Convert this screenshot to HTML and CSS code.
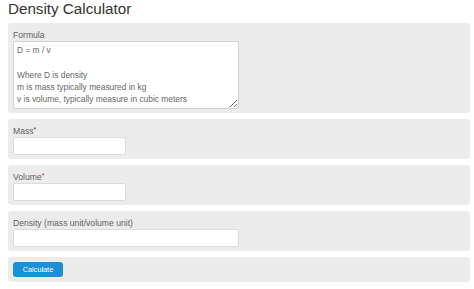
FILE: index.html
```html
<!DOCTYPE html>
<html>
<head>
<meta charset="utf-8">
<link rel="stylesheet" href="styles.css">
</head>
<body>
<h1 class="title">Density Calculator</h1>
<div class="panel">
  <label class="lbl">Formula</label>
  <textarea class="formula">D = m / v

Where D is density
m is mass typically measured in kg
v is volume, typically measure in cubic meters</textarea>
</div>
<div class="panel">
  <label class="lbl">Mass<span class="req">*</span></label>
  <input class="field short" type="text">
</div>
<div class="panel">
  <label class="lbl">Volume<span class="req">*</span></label>
  <input class="field short" type="text">
</div>
<div class="panel">
  <label class="lbl">Density (mass unit/volume unit)</label>
  <input class="field long" type="text">
</div>
<div class="panel btnpanel">
  <button class="calc" type="button">Calculate</button>
</div>
</body>
</html>
```
FILE: styles.css
```css
html, body {
  margin: 0;
  padding: 0;
  background: #ffffff;
}
body {
  padding: 0 4px 0 8px;
  font-family: "Liberation Sans", Arial, sans-serif;
}
.title {
  margin: 0 0 5px 0;
  font-size: 15.2px;
  line-height: 18px;
  font-weight: normal;
  color: #333333;
}
.panel {
  display: flex;
  flex-direction: column;
  align-items: flex-start;
  background: #ececec;
  border-radius: 3px;
  padding: 7px 5px 4px 5px;
  margin-bottom: 6px;
  width: 452px;
}
.lbl {
  display: block;
  font-size: 8.6px;
  line-height: 11px;
  height: 11px;
  color: #626262;
}
.req {
  color: #cc2222;
  font-size: 7px;
  line-height: 0;
  vertical-align: 2px;
}
.formula {
  box-sizing: border-box;
  display: block;
  width: 226px;
  height: 68px;
  margin: 0;
  padding: 2px 3px;
  border: 1px solid #d2d2d2;
  border-radius: 2px;
  background: #ffffff;
  font-family: "Liberation Sans", Arial, sans-serif;
  font-size: 8.4px;
  line-height: 12.3px;
  color: #666666;
  overflow: hidden;
}
.field {
  box-sizing: border-box;
  display: block;
  height: 18px;
  margin: 0;
  padding: 0 3px;
  border: 1px solid #dcdcdc;
  border-radius: 2px;
  background: #ffffff;
  font-size: 9px;
}
.short {
  width: 113px;
}
.long {
  width: 226px;
}
.btnpanel {
  padding: 5px;
}
.calc {
  display: block;
  width: 50px;
  height: 15px;
  padding: 0;
  border: none;
  border-radius: 3px;
  background: #1c8fd8;
  color: #ffffff;
  font-family: "Liberation Sans", Arial, sans-serif;
  font-size: 7.3px;
  line-height: 15px;
}
```
